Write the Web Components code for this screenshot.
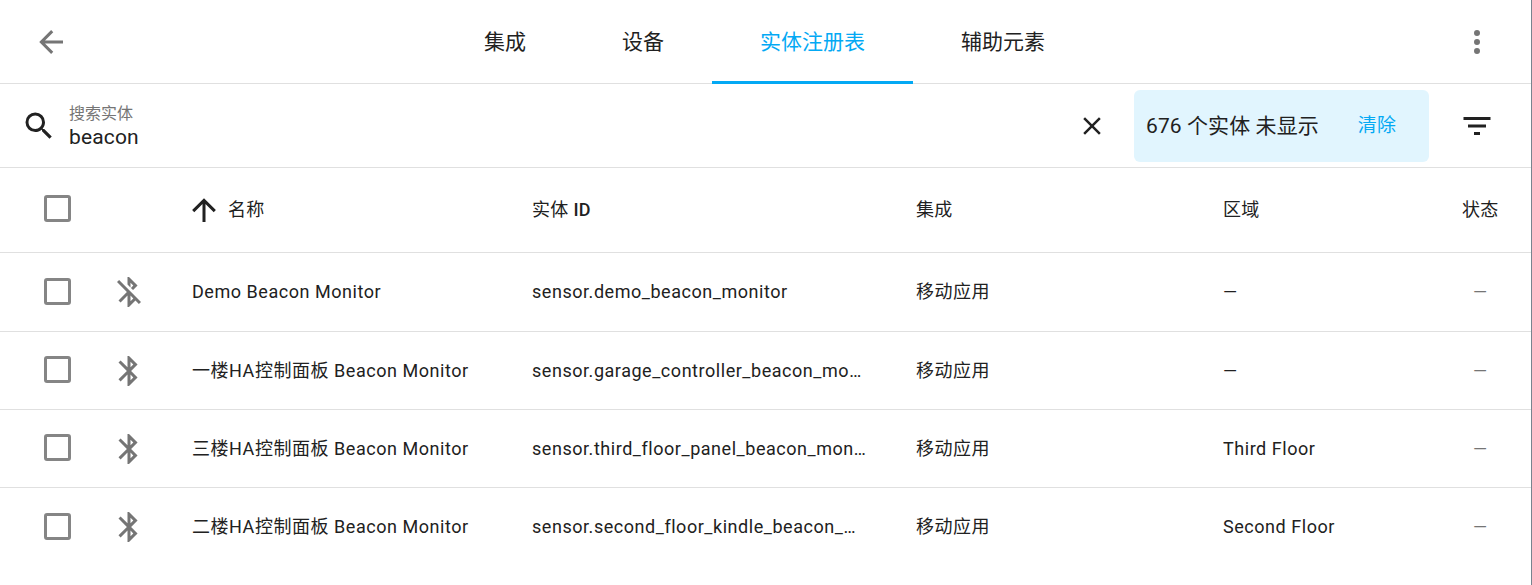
<!DOCTYPE html>
<html lang="zh">
<head>
<meta charset="utf-8">
<title>实体注册表</title>
<style>
  html, body { margin: 0; background: #fff; }
  body { font-family: Roboto, "Noto Sans CJK SC", sans-serif; color: #212121; overflow: hidden; }
</style>
</head>
<body>
<config-page>
  <page-tabs slot="tabs">
    <page-tab>集成</page-tab>
    <page-tab>设备</page-tab>
    <page-tab active>实体注册表</page-tab>
    <page-tab>辅助元素</page-tab>
  </page-tabs>
  <search-bar label="搜索实体" value="beacon" hidden-count="676 个实体 未显示" action="清除"></search-bar>
  <entity-table>
    <table-head></table-head>
    <entity-row first off name="Demo Beacon Monitor" entity="sensor.demo_beacon_monitor" integration="移动应用" area="—"></entity-row>
    <entity-row name="一楼HA控制面板 Beacon Monitor" entity="sensor.garage_controller_beacon_monitor" integration="移动应用" area="—"></entity-row>
    <entity-row name="三楼HA控制面板 Beacon Monitor" entity="sensor.third_floor_panel_beacon_monitor" integration="移动应用" area="Third Floor"></entity-row>
    <entity-row last name="二楼HA控制面板 Beacon Monitor" entity="sensor.second_floor_kindle_beacon_monitor" integration="移动应用" area="Second Floor"></entity-row>
  </entity-table>
</config-page>

<script>
  const ICONS = {
    back: 'M20,11V13H8L13.5,18.5L12.08,19.92L4.16,12L12.08,4.08L13.5,5.5L8,11H20Z',
    dots: 'M12,16A2,2 0 0,1 14,18A2,2 0 0,1 12,20A2,2 0 0,1 10,18A2,2 0 0,1 12,16M12,10A2,2 0 0,1 14,12A2,2 0 0,1 12,14A2,2 0 0,1 10,12A2,2 0 0,1 12,10M12,4A2,2 0 0,1 14,6A2,2 0 0,1 12,8A2,2 0 0,1 10,6A2,2 0 0,1 12,4Z',
    search: 'M9.5,3A6.5,6.5 0 0,1 16,9.5C16,11.11 15.41,12.59 14.44,13.73L14.71,14H15.5L20.5,19L19,20.5L14,15.5V14.71L13.73,14.44C12.59,15.41 11.11,16 9.5,16A6.5,6.5 0 0,1 3,9.5A6.5,6.5 0 0,1 9.5,3M9.5,5C7,5 5,7 5,9.5C5,12 7,14 9.5,14C12,14 14,12 14,9.5C14,7 12,5 9.5,5Z',
    close: 'M19,6.41L17.59,5L12,10.59L6.41,5L5,6.41L10.59,12L5,17.59L6.41,19L12,13.41L17.59,19L19,17.59L13.41,12L19,6.41Z',
    filter: 'M6,13H18V11H6M3,6V8H21V6M10,18H14V16H10V18Z',
    up: 'M13,20H11V8L5.5,13.5L4.08,12.08L12,4.16L19.92,12.08L18.5,13.5L13,8V20Z',
    bluetooth: 'M14.88,16.29L13,18.17V14.41M13,5.83L14.88,7.71L13,9.58M17.71,7.71L12,2H11V9.58L6.41,5L5,6.41L10.59,12L5,17.58L6.41,19L11,14.41V22H12L17.71,16.29L13.41,12L17.71,7.71Z',
    bluetoothOff: 'M13,5.83L14.88,7.71L13.28,9.31L14.69,10.72L17.71,7.7L12,2H11V7.03L13,9.03M5.41,4L4,5.41L10.59,12L5,17.59L6.41,19L11,14.41V22H12L16.29,17.71L18.59,20L20,18.59M13,18.17V14.41L14.88,16.29'
  };

  // small helper, every element below just sets its shadow html once
  class Base extends HTMLElement {
    constructor() {
      super();
      this.attachShadow({mode: 'open'});
    }
    connectedCallback() {
      this.shadowRoot.innerHTML = this.render();
    }
    attr(name) {
      return this.getAttribute(name) || '';
    }
  }

  customElements.define('mdi-icon', class extends Base {
    render() {
      return `<style>
        :host { display: block; width: var(--icon-size, 36px); height: var(--icon-size, 36px); color: var(--icon-color, #757575); flex: none; }
        svg { display: block; width: 100%; height: 100%; fill: currentColor; }
      </style>
      <svg viewBox="0 0 24 24"><path d="${ICONS[this.attr('name')]}"></path></svg>`;
    }
  });

  customElements.define('check-box', class extends Base {
    render() {
      return `<style>
        :host { display: block; width: 27px; height: 27px; box-sizing: border-box; border: 3px solid #858585; border-radius: 3px; flex: none; }
      </style>`;
    }
  });

  customElements.define('config-page', class extends Base {
    render() {
      return `<style>
        :host { display: block; height: 585px; box-sizing: border-box; border-right: 1px solid #78848f; --cols: 108px 84px 340px 384px 307px 239px 1fr; }
        .top { display: flex; align-items: center; height: 83px; border-bottom: 1px solid #e0e0e0; padding: 0 36px 0 33px; }
        ::slotted(page-tabs) { flex: 1; }
      </style>
      <div class="top">
        <mdi-icon name="back"></mdi-icon>
        <slot name="tabs"></slot>
        <mdi-icon name="dots"></mdi-icon>
      </div>
      <slot></slot>`;
    }
  });

  customElements.define('page-tabs', class extends Base {
    render() {
      return `<style>
        :host { display: flex; justify-content: center; height: 84px; align-self: flex-start; margin-left: 1px; }
      </style><slot></slot>`;
    }
  });

  customElements.define('page-tab', class extends Base {
    render() {
      const active = this.hasAttribute('active');
      return `<style>
        :host { display: flex; align-items: center; box-sizing: border-box; height: 84px; padding: 0 48px 1px; font-size: 21px; line-height: 28px; color: ${active ? '#03a9f4' : '#212121'}; ${active ? 'box-shadow: inset 0 -3px 0 #03a9f4;' : ''} }
      </style><slot></slot>`;
    }
  });

  customElements.define('search-bar', class extends Base {
    render() {
      return `<style>
        :host { display: flex; align-items: center; height: 83px; border-bottom: 1px solid #e0e0e0; padding-left: 21px; }
        .field { flex: 1; margin-left: 12px; padding-top: 4px; }
        .label { font-size: 16px; line-height: 20px; color: #757575; }
        .value { font-size: 21px; line-height: 27px; letter-spacing: .15px; color: #212121; }
        .clear { --icon-color: #212121; --icon-size: 30px; margin-right: 27px; }
        .chip { display: flex; align-items: center; box-sizing: border-box; width: 295px; height: 72px; padding: 1px 32px 0 12px; border-radius: 6px; background: #e1f5fe; font-size: 21px; line-height: 28px; letter-spacing: .1px; color: #212121; }
        .chip span { flex: 1; }
        .chip b { font-weight: 400; font-size: 19px; color: #03a9f4; margin-right: 1px; }
        .filter { --icon-color: #212121; margin: 0 36px 0 30px; }
      </style>
      <mdi-icon name="search" style="--icon-color:#212121"></mdi-icon>
      <div class="field">
        <div class="label">${this.attr('label')}</div>
        <div class="value">${this.attr('value')}</div>
      </div>
      <mdi-icon class="clear" name="close"></mdi-icon>
      <div class="chip"><span>${this.attr('hidden-count')}</span><b>${this.attr('action')}</b></div>
      <mdi-icon class="filter" name="filter"></mdi-icon>`;
    }
  });

  customElements.define('entity-table', class extends Base {
    render() {
      return `<style>:host { display: block; }</style><slot></slot>`;
    }
  });

  const CELL_CSS = `
    .cell { white-space: nowrap; overflow: hidden; text-overflow: ellipsis; line-height: 24px; }
    .pick { display: flex; padding-left: 44px; }
  `;

  customElements.define('table-head', class extends Base {
    render() {
      return `<style>
        :host { display: grid; grid-template-columns: var(--cols); align-items: center; height: 84px; border-bottom: 1px solid #e0e0e0; font-size: 18px; letter-spacing: .3px; color: #212121; }
        ${CELL_CSS}
        .name { display: flex; align-items: center; margin-left: -6px; gap: 6px; line-height: 24px; --icon-color: #212121; }
        .name mdi-icon { margin-top: -1px; }
        .pick { margin-top: -4px; }
        b { font-weight: 500; }
      </style>
      <div class="pick"><check-box></check-box></div>
      <div></div>
      <div class="name"><mdi-icon name="up"></mdi-icon><span>名称</span></div>
      <div class="cell">实体 <b>ID</b></div>
      <div class="cell">集成</div>
      <div class="cell">区域</div>
      <div class="cell">状态</div>`;
    }
  });

  customElements.define('entity-row', class extends Base {
    render() {
      const first = this.hasAttribute('first');
      const icon = this.hasAttribute('off') ? 'bluetoothOff' : 'bluetooth';
      const line = this.hasAttribute('last') ? 'none' : '1px solid #e0e0e0';
      return `<style>
        :host { display: grid; grid-template-columns: var(--cols); align-items: center; box-sizing: border-box; height: ${first ? 79 : 78}px; border-bottom: ${line}; font-size: 18px; letter-spacing: .54px; color: #212121; }
        ${CELL_CSS}
        .id { padding-right: 48px; }
        .dash { color: #757575; padding-left: 11px; }
        mdi-icon { margin-left: 3px; }
        .pick { margin-top: ${first ? -1 : -2}px; }
      </style>
      <div class="pick"><check-box></check-box></div>
      <div><mdi-icon name="${icon}"></mdi-icon></div>
      <div class="cell">${this.attr('name')}</div>
      <div class="cell id">${this.attr('entity')}</div>
      <div class="cell">${this.attr('integration')}</div>
      <div class="cell">${this.attr('area')}</div>
      <div class="cell dash">—</div>`;
    }
  });
</script>
</body>
</html>
